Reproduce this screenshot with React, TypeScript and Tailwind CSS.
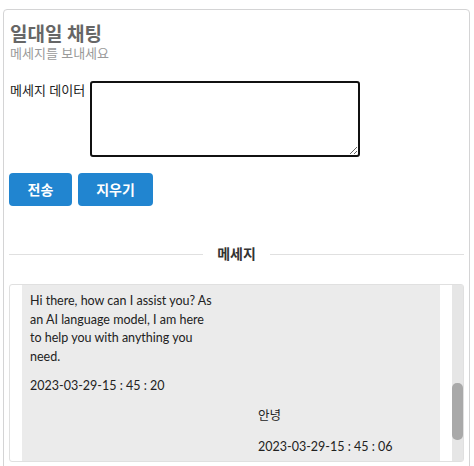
const font = { fontFamily: 'Lato, "Noto Sans CJK KR", "Noto Sans", sans-serif' };

interface Message {
  text: string;
  time: string;
  mine: boolean;
}

const messages: Message[] = [
  {
    text: 'Hi there, how can I assist you? As an AI language model, I am here to help you with anything you need.',
    time: '2023-03-29-15 : 45 : 20',
    mine: false,
  },
  { text: '안녕', time: '2023-03-29-15 : 45 : 06', mine: true },
];

export default function App() {
  return (
    <div className="h-[466px] overflow-hidden bg-white pl-[3px] pr-[4px] pt-[9px]" style={font}>
      <div className="h-[480px] rounded-[4px] border border-[#d4d4d5] px-[5px] pt-[12px]">
        <h3 className="pl-[1px] text-[19px] font-bold leading-[24px] text-[#666]">일대일 채팅</h3>
        <div className="pl-[1px] text-[13px] leading-[15px] text-[#9a9a9a]">메세지를 보내세요</div>

        <div className="mt-[20px] flex items-start">
          <label className="w-[81px] pl-[1px] pt-[1px] text-[13px] leading-[16px] text-[#222]">메세지 데이터</label>
          <textarea className="h-[76px] w-[270px] resize-y rounded-[3px] border-2 border-[#111] bg-white outline-none" />
        </div>

        <div className="mt-[16px] flex gap-[6px]">
          <button className="h-[33px] w-[63px] rounded-[4px] bg-[#2185d0] text-[14px] font-bold text-white">전송</button>
          <button className="h-[33px] w-[75px] rounded-[4px] bg-[#2185d0] text-[14px] font-bold text-white">지우기</button>
        </div>

        <div className="mt-[40px] flex items-center">
          <div className="h-px flex-1 bg-[#e0e0e0]" />
          <div className="px-[14px] text-[14px] font-bold leading-[16px] text-[#333]">메세지</div>
          <div className="h-px flex-1 bg-[#e0e0e0]" />
        </div>

        <div className="mt-[22px] flex h-[178px] rounded-[3px] border border-[#e0e0e0] bg-white pl-[12px]">
          <div className="flex-1 bg-[#ebebeb] px-[8px] pt-[7px] text-[12.5px] leading-[18.5px] text-[#222]">
            {messages.map((m, i) => (
              <div key={i} className={m.mine ? 'ml-[228px] mt-[11px]' : 'w-[184px]'}>
                <p>{m.text}</p>
                <p className={m.mine ? 'mt-[13px]' : 'mt-[11px]'}>{m.time}</p>
              </div>
            ))}
          </div>
          <div className="w-[12px]" />
          <div className="flex w-[11px] flex-col bg-[#e6e6e6] pt-[98px]">
            <div className="h-[57px] rounded-[5px] bg-[#a9a9a9]" />
          </div>
        </div>
      </div>
    </div>
  );
}
